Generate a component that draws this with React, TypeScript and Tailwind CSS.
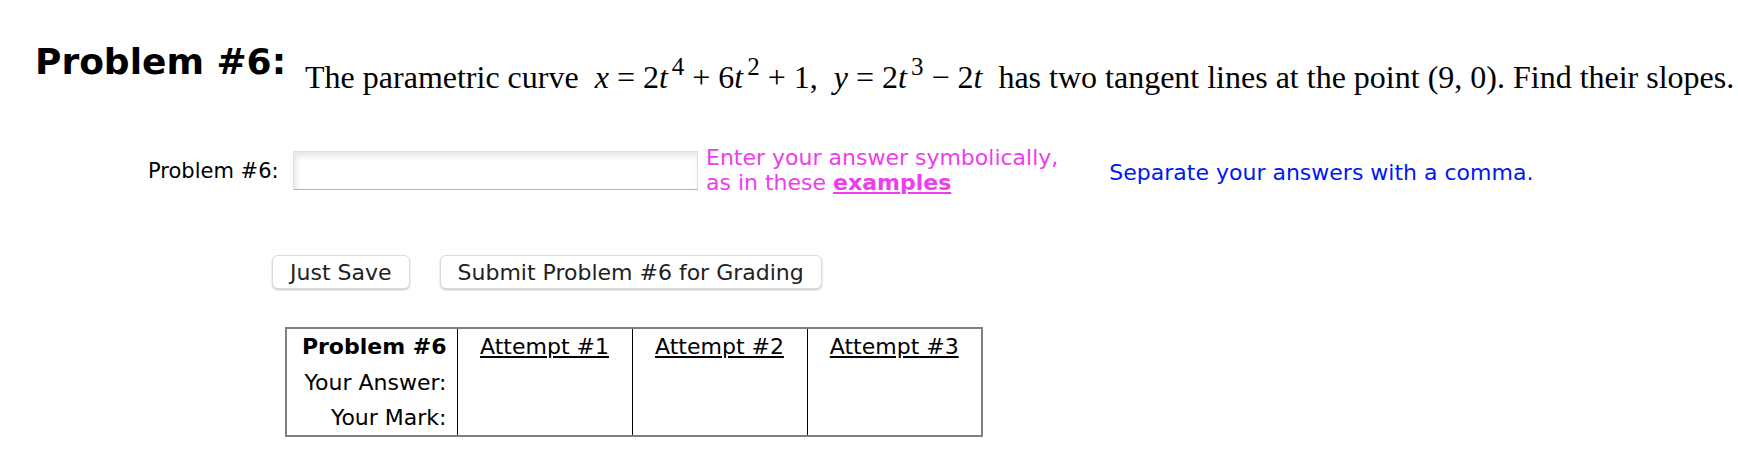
export default function App() {
  const sans = "font-['DejaVu_Sans',Verdana,sans-serif]";
  const attempts = ["Attempt #1", "Attempt #2", "Attempt #3"];

  return (
    <div className={`w-[1738px] h-[468px] bg-white text-black overflow-hidden ${sans}`}>
      {/* problem statement */}
      <div className="flex items-start pt-[41px] pl-[35px]">
        <h3 className="text-[36px] leading-[42px] font-bold whitespace-nowrap">Problem #6:</h3>
        <p className="ml-[19px] mt-[18px] text-[32px] leading-[36px] whitespace-nowrap font-['Liberation_Serif','Times_New_Roman',serif]">
          The parametric curve&nbsp; <i>x</i> = 2<i>t</i>
          <sup className="text-[25px] ml-[4px] relative -top-[13px]">4</sup> + 6<i>t</i>
          <sup className="text-[25px] ml-[4px] relative -top-[13px]">2</sup> + 1,&nbsp; <i>y</i> = 2<i>t</i>
          <sup className="text-[25px] ml-[4px] relative -top-[13px]">3</sup> − 2<i>t</i>&nbsp; has two tangent lines at the point (9, 0). Find their slopes.
        </p>
      </div>

      {/* answer row */}
      <div className="flex items-center mt-[50px] pl-[148px] text-[22px]">
        <label className="w-[145px] pt-[4px] text-[21px]">Problem #6:</label>
        <input
          type="text"
          className="w-[405px] h-[39px] border border-[#dedede] border-b-[#b5b5b5] shadow-[inset_2px_4px_6px_rgba(0,0,0,0.10)] outline-none"
        />
        <div className="ml-[8px] leading-[25px] text-[#ee3dee]">
          <div>Enter your answer symbolically,</div>
          <div>
            as in these{" "}
            <a href="#" className="font-bold underline">
              examples
            </a>
          </div>
        </div>
        <div className="ml-[51px] pt-[4px] text-[#0018f5]">Separate your answers with a comma.</div>
      </div>

      {/* buttons */}
      <div className="flex gap-[30px] mt-[60px] pl-[272px] text-[22px]">
        <button className="h-[34px] px-[17px] rounded-[6px] bg-white border border-[#dcdcdc] shadow-[0_1px_2px_rgba(0,0,0,0.25)] text-[#222]">
          Just Save
        </button>
        <button className="h-[34px] px-[17px] rounded-[6px] bg-white border border-[#dcdcdc] shadow-[0_1px_2px_rgba(0,0,0,0.25)] text-[#222]">
          Submit Problem #6 for Grading
        </button>
      </div>

      {/* attempts table */}
      <div className="mt-[38px] ml-[285px]">
        <table className="border-2 border-[#808080] border-collapse text-[22px]">
          <tbody>
            <tr className="h-[36px]">
              <th className="w-[171px] pr-[10px] text-right font-bold border-r border-black">Problem #6</th>
              {attempts.map((a) => (
                <th key={a} className="w-[175px] font-normal text-center border-r border-black last:border-r-0">
                  <span className="underline">{a}</span>
                </th>
              ))}
            </tr>
            <tr className="h-[36px]">
              <td className="pr-[10px] text-right border-r border-black">Your Answer:</td>
              <td className="border-r border-black"></td>
              <td className="border-r border-black"></td>
              <td></td>
            </tr>
            <tr className="h-[36px]">
              <td className="pr-[10px] text-right border-r border-black">Your Mark:</td>
              <td className="border-r border-black"></td>
              <td className="border-r border-black"></td>
              <td></td>
            </tr>
          </tbody>
        </table>
      </div>
    </div>
  );
}
